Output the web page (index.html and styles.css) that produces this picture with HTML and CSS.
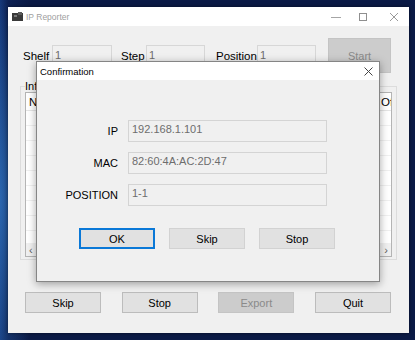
FILE: index.html
```html
<!DOCTYPE html>
<html>
<head>
<meta charset="utf-8">
<title>IP Reporter</title>
<link rel="stylesheet" href="styles.css">
</head>
<body>
<div class="desktop">
  <div class="window">
    <div class="titlebar">
      <svg class="appicon" width="11" height="9" viewBox="0 0 11 9"><rect x="0" y="1" width="11" height="8" fill="#3a3a3a"/><rect x="6" y="0" width="4" height="3" fill="#5a5a5a"/><rect x="2" y="3" width="3" height="2" fill="#7a7a7a"/></svg>
      <span class="title">IP Reporter</span>
      <div class="controls">
        <span class="ctl ctl-min"><svg width="10" height="10" viewBox="0 0 10 10"><line x1="0" y1="5.5" x2="10" y2="5.5" stroke="#a5a5a5"/></svg></span>
        <span class="ctl ctl-max"><svg width="10" height="10" viewBox="0 0 10 10"><rect x="1.5" y="1.5" width="7" height="7" fill="none" stroke="#8f8f8f"/></svg></span>
        <span class="ctl ctl-close"><svg width="10" height="10" viewBox="0 0 10 10"><path d="M1 1 L9 9 M9 1 L1 9" stroke="#9a9a9a" fill="none"/></svg></span>
      </div>
    </div>
    <div class="main">
      <div class="toprow">
        <span class="lbl lbl-shelf">Shelf</span>
        <div class="field f-shelf">1</div>
        <span class="lbl lbl-step">Step</span>
        <div class="field f-step">1</div>
        <span class="lbl lbl-pos">Position</span>
        <div class="field f-pos">1</div>
        <button class="btn btn-disabled btn-start">Start</button>
      </div>
      <fieldset class="group">
        <legend>Information</legend>
        <div class="list">
          <div class="lhead">
            <span class="hcol hcol-first">No</span>
            <span class="hcol hcol-last">Office</span>
          </div>
          <div class="lrows"></div>
          <div class="lscroll"><span class="arrow">&lsaquo;</span><span class="arrow">&rsaquo;</span></div>
        </div>
      </fieldset>
      <div class="bottomrow">
        <button class="btn">Skip</button>
        <button class="btn">Stop</button>
        <button class="btn btn-disabled">Export</button>
        <button class="btn">Quit</button>
      </div>
    </div>

    <div class="dialog">
      <div class="dtitle">
        <span class="dtitle-text">Confirmation</span>
        <svg class="dclose" width="9" height="9" viewBox="0 0 9 9"><path d="M0.5 0.5 L8.5 8.5 M8.5 0.5 L0.5 8.5" stroke="#444" fill="none"/></svg>
      </div>
      <div class="dbody">
        <div class="dgrid">
          <span class="dlabel">IP</span>
          <div class="dfield">192.168.1.101</div>
          <span class="dlabel">MAC</span>
          <div class="dfield">82:60:4A:AC:2D:47</div>
          <span class="dlabel">POSITION</span>
          <div class="dfield">1-1</div>
        </div>
        <div class="dbtns">
          <button class="btn btn-default">OK</button>
          <button class="btn btn-flat">Skip</button>
          <button class="btn btn-flat">Stop</button>
        </div>
      </div>
    </div>
  </div>
</div>
</body>
</html>
```
FILE: styles.css
```css
* { box-sizing: border-box; }
html, body { margin: 0; padding: 0; }
body {
  width: 415px;
  height: 340px;
  overflow: hidden;
  font-family: "Liberation Sans", Arial, sans-serif;
  background:
    radial-gradient(ellipse 40px 200px at 0 200px, rgba(60,140,220,0.55), rgba(60,140,220,0) 100%),
    linear-gradient(90deg, #16397a 0, #10296189 8px, rgba(0,0,0,0) 30px),
    #0b1a46;
}
.desktop { padding: 7px 0 0 8px; }
.window {
  position: relative;
  width: 401px;
  height: 326px;
  background: #f0f0f0;
  box-shadow: 0 0 4px rgba(0,0,0,0.5);
}
.titlebar {
  height: 19px;
  background: #ffffff;
  display: flex;
  align-items: center;
}
.appicon { margin-left: 4px; }
.title {
  margin-left: 3px;
  font-size: 8.5px;
  color: #a0a0a0;
}
.controls { margin-left: auto; display: flex; height: 19px; }
.ctl { display: flex; align-items: center; justify-content: center; height: 19px; }
.ctl-min { width: 22px; }
.ctl-max { width: 31px; }
.ctl-close { width: 31px; }

.main { padding: 12px 12px 0 12px; }
.toprow {
  display: flex;
  align-items: center;
  height: 35px;
  padding-left: 3px;
}
.lbl { font-size: 11.5px; color: #000; }
.lbl-shelf { width: 29px; }
.lbl-step { width: 25px; margin-left: 9px; }
.lbl-pos { width: 41px; margin-left: 11px; }
.field {
  height: 21px;
  border: 1px solid #d7d7d7;
  background: #f0f0f0;
  color: #6d6d6d;
  font-size: 11px;
  padding: 3px 0 0 2px;
}
.f-shelf { width: 60px; }
.f-step { width: 59px; }
.f-pos { width: 59px; }

.btn {
  width: 76px;
  height: 21px;
  padding: 0;
  background: #e1e1e1;
  border: 1px solid #bcbcbc;
  font-family: "Liberation Sans", Arial, sans-serif;
  font-size: 11px;
  color: #000;
}
.btn-disabled {
  background: #cccccc;
  border-color: #c4c4c4;
  color: #8a8a8a;
}
.btn-start {
  width: 63px;
  height: 35px;
  margin-left: 12px;
}

.group {
  margin: 7px 0 0 0;
  padding: 0 4px 2px 4px;
  border: 1px solid #dcdcdc;
  min-width: 0;
}
.group legend {
  font-size: 11px;
  line-height: 12px;
  padding: 0;
  color: #000;
}
.list {
  height: 165px;
  background: #ffffff;
  border: 1px solid #b4b4b4;
  display: flex;
  flex-direction: column;
  overflow: hidden;
}
.lhead {
  height: 18px;
  display: flex;
  align-items: center;
  font-size: 11.5px;
  color: #000;
  border-bottom: 1px solid #e5e5e5;
  flex: none;
  overflow: hidden;
  white-space: nowrap;
}
.hcol-first { flex: none; width: 355px; padding-left: 3px; }
.hcol-last { flex: none; white-space: nowrap; }
.lrows {
  flex: 1;
  background: repeating-linear-gradient(to bottom, #ffffff 0, #ffffff 14px, #f0f0f0 14px, #f0f0f0 15px);
}
.lscroll {
  height: 13px;
  flex: none;
  display: flex;
  justify-content: space-between;
  align-items: center;
  background: #f0f0f0;
  padding: 0 3px;
  font-size: 11px;
  color: #606060;
}

.bottomrow {
  margin-top: 32px;
  display: flex;
  justify-content: space-between;
  padding: 0 6px 0 5px;
}

.dialog {
  position: absolute;
  left: 28px;
  top: 54px;
  width: 344px;
  height: 221px;
  background: #f0f0f0;
  border: 1px solid #858585;
  box-shadow: 0 2px 8px rgba(0,0,0,0.35);
  z-index: 5;
}
.dtitle {
  height: 18px;
  background: #ffffff;
  display: flex;
  align-items: center;
  padding-left: 3px;
}
.dtitle-text { font-size: 9.5px; color: #000; }
.dclose { margin-left: auto; margin-right: 6px; }
.dbody { padding-top: 40px; }
.dgrid {
  display: grid;
  grid-template-columns: 81px 199px;
  column-gap: 10px;
  row-gap: 10px;
  align-items: center;
}
.dlabel { text-align: right; font-size: 11px; color: #000; }
.dfield {
  height: 22px;
  border: 1px solid #d4d4d4;
  background: #f0f0f0;
  color: #6d6d6d;
  font-size: 11px;
  padding: 2px 0 0 3px;
}
.dbtns {
  display: flex;
  gap: 14px;
  margin-top: 22px;
  padding-left: 42px;
}
.btn-default {
  border: 2px solid #0a78d7;
}
.btn-flat {
  border-color: #d2d2d2;
}
```
